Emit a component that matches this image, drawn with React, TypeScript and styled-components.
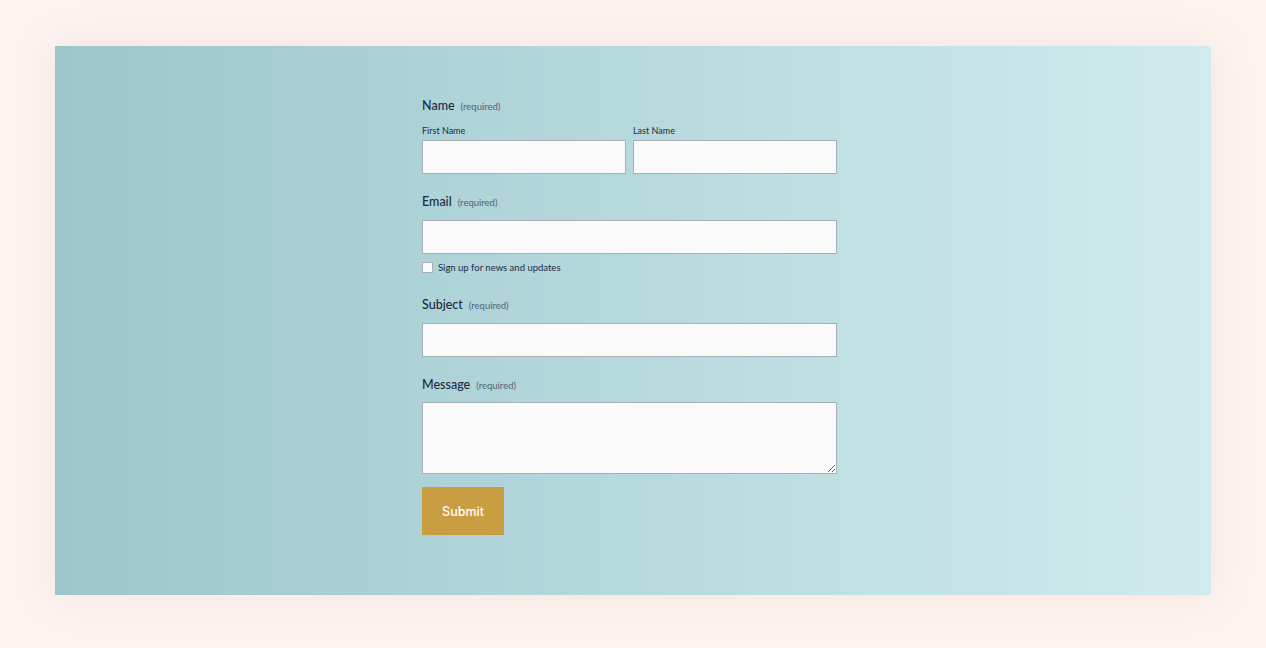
import * as React from 'react';
import styled, { createGlobalStyle } from 'styled-components';

const GlobalStyle = createGlobalStyle`
  html, body {
    margin: 0;
    background: #fdf3f0;
  }
  body {
    padding: 46px 55px 53px;
    font-family: "Lato", "Noto Sans", sans-serif;
  }
`;

const Panel = styled.section`
  background: linear-gradient(90deg, #9cc5cc 0%, #b6d9dd 50%, #d0ebee 100%);
  box-shadow: 0 0 40px rgba(190, 140, 130, 0.14);
  padding: 51px 0 60px 367px;
`;

const Form = styled.form`
  width: 415px;
  display: flex;
  flex-direction: column;
`;

const Label = styled.div<{ $top?: number }>`
  box-sizing: border-box;
  margin-top: ${p => p.$top || 0}px;
  height: 16px;
  padding-top: 2px;
  line-height: 14px;
  font-size: 12.5px;
  font-weight: 500;
  color: #1d2841;
  display: flex;
  align-items: baseline;
  gap: 6px;
`;

const Required = styled.span`
  font-size: 9.5px;
  color: #52637a;
  font-weight: 400;
`;

const NameRow = styled.div`
  margin-top: 11px;
  display: grid;
  grid-template-columns: 1fr 1fr;
  column-gap: 7px;
`;

const SubField = styled.div`
  display: flex;
  flex-direction: column;
`;

const SubLabel = styled.div`
  box-sizing: border-box;
  height: 12px;
  padding-top: 1px;
  line-height: 11px;
  font-size: 9px;
  color: #1d2841;
  margin-bottom: 4px;
`;

const Input = styled.input<{ $top?: number }>`
  box-sizing: border-box;
  width: 100%;
  height: 34px;
  margin: ${p => p.$top || 0}px 0 0;
  background: #fafafa;
  border: 1px solid #a9b0b3;
  border-radius: 0;
  outline: none;
  padding: 0 10px;
  font-family: inherit;
`;

const TextArea = styled.textarea`
  box-sizing: border-box;
  display: block;
  width: 100%;
  height: 72px;
  margin-top: 10px;
  background: #fafafa;
  border: 1px solid #a9b0b3;
  border-radius: 0;
  outline: none;
  padding: 8px 10px;
  font-family: inherit;
`;

const CheckRow = styled.label`
  margin-top: 7px;
  height: 12px;
  display: flex;
  align-items: center;
  gap: 5px;
  font-size: 9.5px;
  color: #1d2841;
`;

const Box = styled.span`
  box-sizing: border-box;
  width: 11px;
  height: 11px;
  background: #fafafa;
  border: 1px solid #a9b0b3;
`;

const Submit = styled.button`
  margin-top: 13px;
  width: 82px;
  height: 48px;
  border: none;
  border-radius: 0;
  background: #c99d41;
  color: #ffffff;
  font-family: "Inter", "Open Sans", sans-serif;
  font-size: 12.5px;
  font-weight: 500;
  cursor: pointer;
`;

export default function App() {
  return (
    <>
      <GlobalStyle />
      <Panel>
        <Form onSubmit={e => e.preventDefault()}>
          <Label>
            Name <Required>(required)</Required>
          </Label>
          <NameRow>
            <SubField>
              <SubLabel>First Name</SubLabel>
              <Input />
            </SubField>
            <SubField>
              <SubLabel>Last Name</SubLabel>
              <Input />
            </SubField>
          </NameRow>

          <Label $top={19}>
            Email <Required>(required)</Required>
          </Label>
          <Input $top={11} />
          <CheckRow>
            <Box />
            Sign up for news and updates
          </CheckRow>

          <Label $top={23}>
            Subject <Required>(required)</Required>
          </Label>
          <Input $top={11} />

          <Label $top={19}>
            Message <Required>(required)</Required>
          </Label>
          <TextArea />

          <Submit type="submit">Submit</Submit>
        </Form>
      </Panel>
    </>
  );
}
